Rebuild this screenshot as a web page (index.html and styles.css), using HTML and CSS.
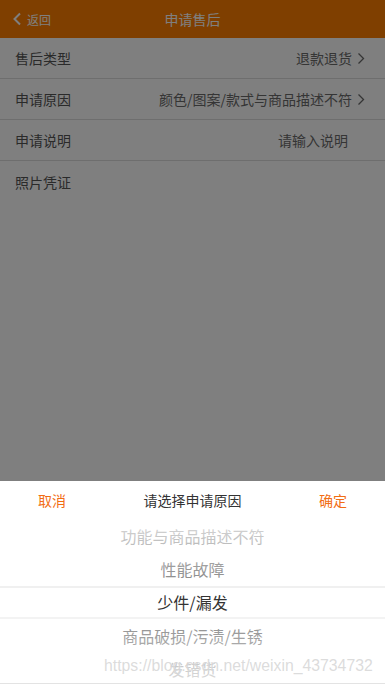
FILE: index.html
```html
<!DOCTYPE html>
<html lang="zh-CN">
<head>
<meta charset="utf-8">
<title>申请售后</title>
<link rel="stylesheet" href="styles.css">
</head>
<body>
<div class="page">
  <header class="topbar">
    <div class="back">
      <svg class="back-icon" width="10" height="14" viewBox="0 0 10 14"><polyline points="8,1.5 2.5,7 8,12.5" fill="none" stroke="currentColor" stroke-width="2"/></svg>
      <span>返回</span>
    </div>
    <div class="title">申请售后</div>
    <div class="spacer"></div>
  </header>
  <div class="list">
    <div class="row">
      <span class="label">售后类型</span>
      <span class="value">退款退货<svg class="chev" width="8" height="13" viewBox="0 0 8 13"><polyline points="1.5,1.5 6.5,6.5 1.5,11.5" fill="none" stroke="currentColor" stroke-width="1.3"/></svg></span>
    </div>
    <div class="row">
      <span class="label">申请原因</span>
      <span class="value">颜色/图案/款式与商品描述不符<svg class="chev" width="8" height="13" viewBox="0 0 8 13"><polyline points="1.5,1.5 6.5,6.5 1.5,11.5" fill="none" stroke="currentColor" stroke-width="1.3"/></svg></span>
    </div>
    <div class="row">
      <span class="label">申请说明</span>
      <span class="value placeholder">请输入说明</span>
    </div>
    <div class="row last">
      <span class="label">照片凭证</span>
    </div>
  </div>
</div>
<div class="mask"></div>
<div class="picker">
  <div class="picker-head">
    <span class="btn">取消</span>
    <span class="picker-title">请选择申请原因</span>
    <span class="btn">确定</span>
  </div>
  <div class="wheel">
    <div class="item">功能与商品描述不符</div>
    <div class="item">性能故障</div>
    <div class="item selected">少件/漏发</div>
    <div class="item">商品破损/污渍/生锈</div>
    <div class="item">发错货</div>
    <div class="fade fade-top"></div>
    <div class="fade fade-bottom"></div>
  </div>
  <div class="watermark">https://blog.csdn.net/weixin_43734732</div>
</div>
</body>
</html>
```
FILE: styles.css
```css
* { box-sizing: border-box; }
html, body {
  margin: 0;
  padding: 0;
  width: 385px;
  height: 686px;
  overflow: hidden;
  background: #fff;
  font-family: "Noto Sans CJK SC", "Noto Sans", sans-serif;
}
.topbar {
  height: 38px;
  background: #ff7e00;
  color: #fff;
  display: grid;
  grid-template-columns: 1fr auto 1fr;
  align-items: center;
}
.back {
  display: flex;
  align-items: center;
  gap: 5px;
  padding-left: 12px;
  font-size: 12px;
}
.back-icon { display: block; }
.title {
  font-size: 14px;
}
.list { background: #fff; }
.row {
  height: 41px;
  border-bottom: 1px solid #dcdcdc;
  display: flex;
  align-items: center;
  justify-content: space-between;
  padding: 0 20px 0 15px;
  font-size: 14px;
}
.row.last { border-bottom: none; }
.label { color: #555; }
.value {
  color: #6a6a6a;
  display: flex;
  align-items: center;
  gap: 5px;
}
.value.placeholder {
  margin-right: 17px;
}
.chev { display: block; }
.mask {
  position: fixed;
  inset: 0;
  background: rgba(0, 0, 0, 0.5);
}
.picker {
  position: fixed;
  left: 0;
  right: 0;
  bottom: 0;
  height: 205px;
  background: #fff;
  overflow: hidden;
}
.picker-head {
  height: 38px;
  display: flex;
  align-items: center;
  justify-content: space-between;
  padding: 0 38px;
  font-size: 14px;
}
.btn { color: #f26d13; }
.picker-title { color: #333; }
.wheel {
  position: relative;
  height: 165px;
  border-bottom: 1px solid #e3e3e3;
  overflow: hidden;
}
.item {
  height: 33.3px;
  display: flex;
  align-items: center;
  justify-content: center;
  font-size: 16px;
  color: #666;
}
.item.selected {
  color: #333;
  border-top: 2px solid #f0f0f0;
  border-bottom: 2px solid #f0f0f0;
}
.fade {
  position: absolute;
  left: 0;
  right: 0;
  height: 66px;
  pointer-events: none;
}
.fade-top {
  top: 0;
  background: linear-gradient(to bottom, rgba(255,255,255,0.8), rgba(255,255,255,0.2));
}
.fade-bottom {
  bottom: 0;
  background: linear-gradient(to top, rgba(255,255,255,0.8), rgba(255,255,255,0.2));
}
.watermark {
  position: absolute;
  left: 104px;
  top: 176px;
  font-family: "Liberation Sans", Arial, sans-serif;
  font-size: 15.8px;
  color: rgba(190, 190, 190, 0.55);
  text-shadow: 0 0 1px rgba(255,255,255,0.8);
  white-space: nowrap;
}
```
